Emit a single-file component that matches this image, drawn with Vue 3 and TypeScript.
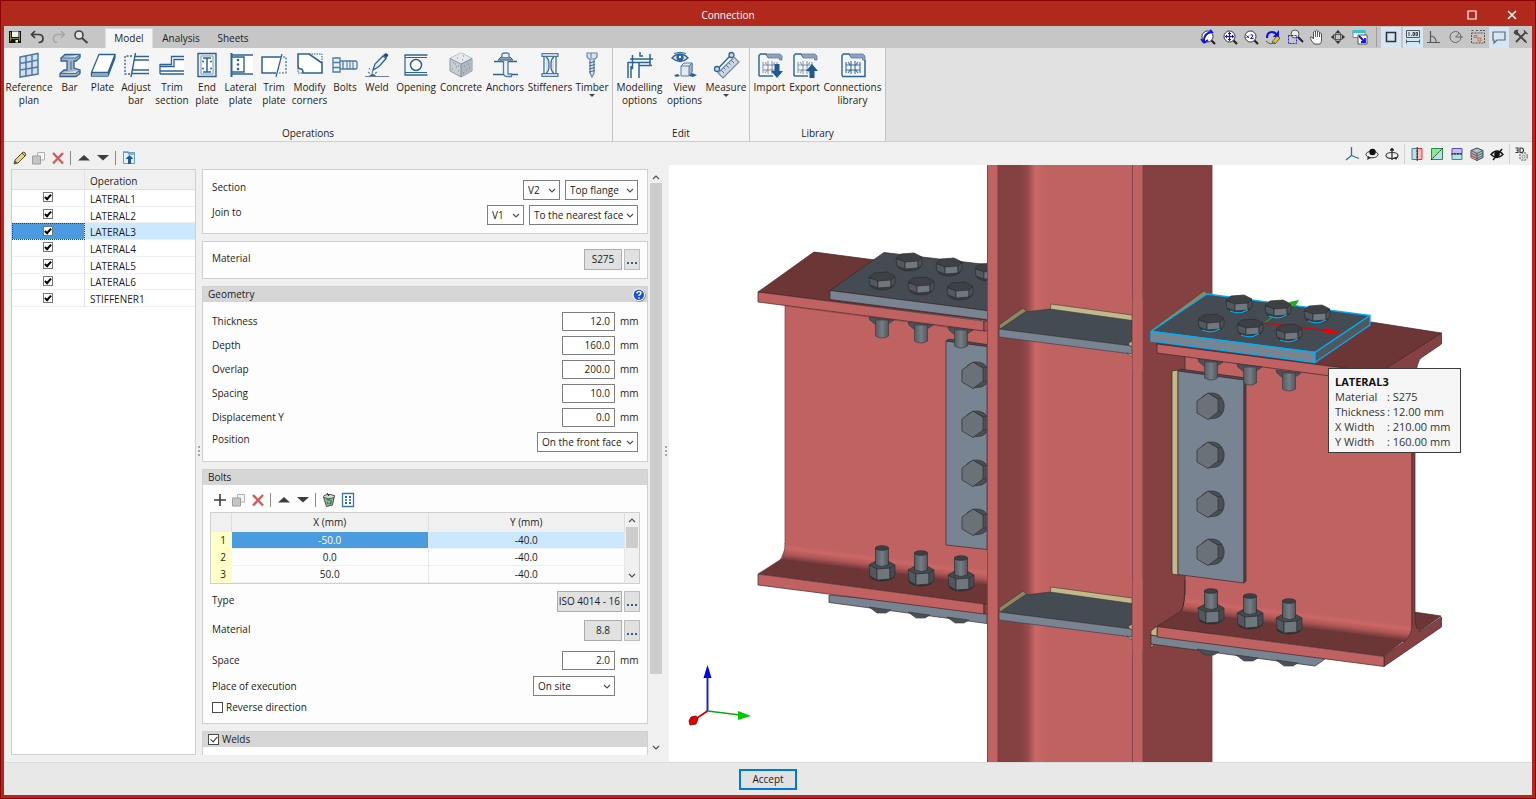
<script setup lang="ts">
import { ref } from 'vue'

interface Tool { icon: string; lines: string[]; menu?: boolean }
interface Group { key: string; title: string; tools: Tool[] }

const B = '#2c6397'
const line = (d: string, w = 1.4, c = B, fill = 'none', extra = '') =>
  `<path d="${d}" fill="${fill}" stroke="${c}" stroke-width="${w}" ${extra}/>`

const folder = line('M2 24V3.5L3.5 2H9l2 2.5', 1.4, B, '#f4f7fb') + '<path d="M9 2h14l2 2v4h-2.500V6H11z" fill="#8fa3bf" stroke="#5b7ba3" stroke-width=".8"/>'
const joint = line('M6 10v11M20 10v11M6 13h14M6 18h14M11 9v13M15 9v13M8 10l3 4M18 10l-3 4M8 21l3-4M18 21l-3-4', 1, '#8193ad')

const icons: Record<string, string> = {
  refplan: line('M4 5L22 1.500V22L4 25zM10 4V24M16 3V23M4 11.500L22 8M4 18L22 15', 1.5, '#4c7ba8', '#d5deea'),
  bar: line('M4 6l4-3.500h15v3l-4 3.500h-2v7l6 2v3.500L19 24.500H3v-3l4-3.500h3V9H4z', 1.3, B, '#a9b5c9') + line('M4 6h15l4-3.500M3 21.500h16l4-3.500M14 9v9', 1.1, '#3f71a3', '#d5dce8'),
  plate: line('M1.500 20.500L9 2.500h16L18 20.500zM1.500 20.500v3.500h16l.5-3.500M18 24l7-18V2.500', 1.3, B, '#fff') + '<path d="M2 21h16v3H2z" fill="#8fa3bf"/>',
  adjust: '<rect x="9" y="4" width="16" height="18" fill="#fff"/>' + line('M9 4H2v18h6', 1.3, B, 'none', 'stroke-dasharray="2 1.500"') + line('M12.500 1L8 25M11 4.500h15M11 8h15M9.500 18H26M8.500 21.500H26', 1.4),
  trim: '<path d="M1 12h11V5h13v17H1z" fill="#fff"/>' + line('M25 4.500H12.500v8H1M25 7.500H15v7H1M1 12v10M1 19h24M1 22h24', 1.3),
  endplate: line('M4 1.500h18v23H4z', 1.4, B, '#e8edf4') + line('M7 4h12v18H7z', 1, '#7d9bbd', '#fff') + line('M9 6h8M13 6v14M9 20h8', 1.5) + '<g fill="#2c6397"><circle cx="9" cy="9.500" r="1"/><circle cx="17" cy="9.500" r="1"/><circle cx="9" cy="16.500" r="1"/><circle cx="17" cy="16.500" r="1"/></g>',
  lateral: '<path d="M4 3h21v20H4z" fill="#fff"/>' + line('M3.500 1v24', 2) + line('M4 3h21M4 22h21M4 5h12v15H4', 1.4) + '<g fill="#2c6397"><circle cx="10" cy="8" r="1.300"/><circle cx="10" cy="12.500" r="1.300"/><circle cx="10" cy="17" r="1.300"/></g>',
  trimplate: '<path d="M1 5h18l-4 17H1z" fill="#fff"/>' + line('M20 5H1v16h14', 1.5) + line('M21 2l-6 23', 1.2) + line('M22 5h3v16h-7', 1.2, B, 'none', 'stroke-dasharray="2 1.500"'),
  corners: line('M1 2v12q0 3 3 3 2 0 2 4h19V11L12 2z', 1.6, B, '#fff') + line('M12 2h13v9M1 16v5h5', 1, B, 'none', 'stroke-dasharray="1.500 1"'),
  bolts: line('M1 6h7v14H1zM1 10.500h7M1 15.500h7M8 9h3v8H8M11 9h13l1 1v6l-1 1H11', 1.3, '#4c7ba8', '#eef2f7') + line('M15 9v8M18 9v8M21 9v8', .9),
  weld: line('M9 18l2-6L19 4l3 2.500-7 8z', 1.3, B, '#eef2f7') + '<path d="M19 3l3-2 2.500 2-2 3z" fill="#1c4c7d"/>' + line('M1 24.500h24M9 18l-1 4M4 20l2 1.500M13 20l-2 1.500M5 16l1 1.500', 1.1, '#6c7f95') + '<path d="M5 24q4-4 7 0z" fill="#2c6397"/>',
  opening: line('M1.500 3h23M1.500 23h23', 1.6) + line('M2 5.500h22M2 20.500h22M2 3v20', 1.2) + line('M7.500 13a5.500 5.500 0 1 0 11 0a5.500 5.500 0 1 0-11 0', 1.5, B, '#fff'),
  concrete: '<path d="M13 1L24 6.500V19L13 25 2 19V6.500z" fill="#c9cdd3" stroke="#8a97a8"/><path d="M13 1L24 6.500 13 12 2 6.500z" fill="#e6eaef"/><path d="M13 12v13l11-6V6.500z" fill="#b2b6bd"/><path d="M2 6.500l11 5.500 11-5.500M13 12v13" stroke="#6f8098" fill="none" stroke-width=".8"/><path d="M5 11h1M8 15h1M4 17h1M10 19h1M16 14h1M20 12h1M18 18h1M21 16h1M9 6h1M14 8h1M15 4h1M7 12h1M10 14h1M15 21h1" stroke="#7c828c"/>',
  anchors: line('M2 9.500h23M1 22.500h12M20 22.500h6', 1.5) + '<path d="M6 8l3-3h9l3 3z" fill="#8fa3bf" stroke="#2c6397"/>' + line('M10 5V2l2-1h3l2 1v3M11.500 9v12q0 4 5 3.500h3v-2.500h-3.500V9', 1.3, '#4c7ba8', '#eef2f7'),
  stiffeners: '<path d="M7 4h12v18H7z" fill="#fff"/>' + line('M5 1.500h16v3H5zM5 21.500h16v3H5z', 1.2, '#4c7ba8', '#c9d5e4') + line('M7 4.500v17M19 4.500v17', 1.2) + line('M9 5q3.500 2 3 8q.5 6-3 8.500M17 5q-3.500 2-3 8q-.5 6 3 8.500', 1.2, B, '#d5deea'),
  timber: line('M8 1h10v4l-2 2h-6L8 5zM11 7h4v14l-2 4-2-4zM12 1v5', 1.2, '#6886aa', '#dde4ed') + line('M10 11l6-1.500M10 14l6-1.500M10 17l6-1.500M10 20l6-1.500', 1.2, '#49688f'),
  modelling: '<path d="M4 11h20v2H12v13H4z" fill="#fff"/>' + line('M3 7h23M5.500 3v14M23 2v11M13 0v4h3M1 10.500h22M1 10v16M4 14v12M12 11v15M12 13.500h13', 1.5),
  viewopt: line('M0 6Q8-2 16 6Q8 13 0 6z', 1.4, B, '#dce6f1') + '<circle cx="8" cy="5.500" r="3.600" fill="#2c6397"/><circle cx="8" cy="5" r="1.200" fill="#fff"/>' + line('M2 1.500Q8-1 14 1.500', 1) + '<path d="M9 14l3-3h8v9l-3 4H9z" fill="#e4eaf2" stroke="#5b7ba3"/><path d="M17 14l3-3v9l-3 4z" fill="#a9b8cc" stroke="#5b7ba3"/><path d="M9 14h8" stroke="#5b7ba3"/><path d="M2 23l4-1 2 2-4 1zM20 21l5 2-4 2-4-1z" fill="#2c6397"/>',
  measure: line('M5.500 16L17 4', 1.4) + line('M1.500 17a2.500 2.500 0 1 0 5 0a2.500 2.500 0 1 0-5 0M16 3a2.500 2.500 0 1 0 5 0a2.500 2.500 0 1 0-5 0', 1.3, B, '#cfd9e6') + line('M5 21L21 5l5 5L10 26z', 1.2, '#7289a8', '#ccd5e0') + line('M8 18l3 3M10.500 15.500l2 2M13 13l3 3M15.500 10.500l2 2M18 8l3 3', 1, '#5b7ba3'),
  import: folder + joint + line('M2 24h14', 1.4) + '<path d="M17.500 12h5v7h3.500l-6 7-6-7h3.500z" fill="#1f5a96"/>',
  export: folder + joint + line('M2 24h14', 1.4) + '<path d="M17.500 26h5v-7h3.500l-6-7-6 7h3.500z" fill="#1f5a96"/>',
  library: folder + line('M2 24.500h23V8', 1.5) + line('M6 10v11M20 10v11M6 13h14M6 18h14M11 9v13M15 9v13M8 10l3 4M18 10l-3 4M8 21l3-4M18 21l-3-4', 1.1, '#3d6da0'),
}

/* 16 x 16 glyphs used on the small toolbars */
const lens = '<path d="M11 11l4 4" stroke="#222" stroke-width="2.200"/><circle cx="7.500" cy="7.500" r="5.500" fill="#fff" stroke="#333"/>'
const small: Record<string, string> = {
  save: '<path d="M2 2h12v12H2z" fill="#111"/><path d="M3 3h1v9H3zM12 3h1v9h-1zM4 9h8v1H4z" fill="#8b8b1a"/><path d="M5 2.500h6.500V8H5z" fill="#f2f2f2"/><path d="M8.500 11h2.500v2.500H8.500z" fill="#eee"/>',
  undo: '<path d="M6 2L2.500 5.500 6 9M2.500 5.500H9.500q4.500 0 4.500 4t-4.500 4" fill="none" stroke="#3c3c3c" stroke-width="1.700"/>',
  redo: '<path d="M10 2l3.500 3.500L10 9M13.500 5.500H7q-4.500 0-4.500 4T6 13.500" fill="none" stroke="#a6a6a6" stroke-width="1.500"/>',
  search: '<circle cx="6" cy="6" r="4" fill="#e4e4e4" stroke="#444" stroke-width="1.600"/><path d="M9 9l5.500 5" stroke="#444" stroke-width="2"/>',
  zprev: lens + '<path d="M4 14Q3 4 12 3L10 1M12 3L8 4M4 14L1 10M4 14l4-3" fill="none" stroke="#1212e0" stroke-width="1.800"/>',
  zall: lens + '<path d="M7.500 3v9M3 7.500h9M6 4.500h3M6 10.500h3M4.500 6v3M10.500 6v3" stroke="#1212e0" stroke-width="1.200"/>',
  z2: lens + '<path d="M3.500 6.500l2.500 2.500M6 6.500L3.500 9M7.500 6q2.500-1 2.500 1L7.500 9.500h3" fill="none" stroke="#1212e0"/>',
  redraw: '<path d="M2 9q0-6 5-6 3 0 5 3" fill="none" stroke="#1212e0" stroke-width="2.200"/><path d="M14 1v7H8z" fill="#1212e0"/><path d="M7 13l5-6 3 2-5 6z" fill="#e9c430" stroke="#333" stroke-width=".7"/><path d="M1 12q5 5 9 1" fill="none" stroke="#555"/>',
  zwin: '<circle cx="8" cy="5" r="4" fill="#eee" stroke="#555"/><path d="M11 8l5 5" stroke="#222" stroke-width="2"/><path d="M1.500 6.500h8v8h-8z" fill="none" stroke="#2222e0" stroke-dasharray="2 1"/>',
  hand: '<path d="M5 15Q1 10 1.500 8q1.500-1 3 2V3q1-1.500 2 0V2q1-1.500 2 0v1q1-1.500 2 0v1.500q1-1 2 0V11q0 3-1.500 4zM6.500 3v5M8.500 3v5M10.500 4v4" fill="#fff" stroke="#444" stroke-width=".9"/>',
  orbit: '<ellipse cx="8" cy="8" rx="6" ry="2.800" fill="none" stroke="#444"/><ellipse cx="8" cy="8" rx="2.800" ry="6" fill="none" stroke="#444"/><path d="M8 1l2 3H6zM8 15l2-3H6zM1 8l3-2v4zM15 8l-3-2v4z" fill="#333"/>',
  panels: '<path d="M1 1.500h12v7H1z" fill="#fff" stroke="#2aa5b5"/><path d="M1 1h12v3H1z" fill="#35c3d3"/><path d="M6 6h9v9H6z" fill="#fff" stroke="#555"/><path d="M7 7l6 6M13 9v4H9" stroke="#1212e0" stroke-width="1.800" fill="none"/>',
  square: '<path d="M3.500 3.500h9v9h-9z" fill="none" stroke="#333" stroke-width="1.600"/>',
  dims: '<path d="M1.500 1.500h13v7h-13zM1 12.500h14M1.500 10.500v4M14.500 10.500v4" fill="none" stroke="#555"/><path d="M4 3v4M6 6.500h.8M8 3.500h1.500v3H8zM11 3.500h1.500v3H11z" stroke="#333" fill="none" stroke-width=".9"/>',
  angle: '<path d="M4.500 2v12M1 13.500h13M4.500 7q5 0 6 6.500" fill="none" stroke="#555" stroke-width="1.200"/>',
  polar: '<circle cx="7.500" cy="8" r="5.500" fill="none" stroke="#666"/><path d="M7.500 8H15M7.500 8l4-4" stroke="#666"/>',
  script: '<path d="M1.500 1.500h3M6 1.500h2M10 1.500h5M1.500 4h13v10h-13z" fill="none" stroke="#555" stroke-dasharray="2 1"/><path d="M4 6.500h3v2H4zM8 9h3v3H8z" fill="none" stroke="#dd6a3f"/>',
  note: '<path d="M2 3h12v8H6l-3 3v-3H2z" fill="none" stroke="#666" stroke-width="1.200"/>',
  tools: '<path d="M3 3l10 10M13 3L3 13" stroke="#444" stroke-width="1.900"/><path d="M1 4q0-3 4-3L4 3l2 2-2 1zM11 1q0 3 4 4M10 10l4 4" fill="#444" stroke="#444"/>',
  axes: '<path d="M7.500 1v8.500L2 14M7.500 9.500L15 12.500" fill="none" stroke="#33718a" stroke-width="1.300"/>',
  eyeorb: '<ellipse cx="8" cy="8.500" rx="6" ry="3.300" fill="none" stroke="#333"/><circle cx="8.500" cy="6" r="3.200" fill="#111"/><path d="M3 14l1-4 3 2z" fill="#333"/>',
  turn: '<path d="M8 2v12M6 4h4" stroke="#333" stroke-width="1.300"/><ellipse cx="8" cy="9.500" rx="6" ry="3" fill="none" stroke="#333" stroke-width="1.200"/><circle cx="8" cy="3.500" r="1.500" fill="#333"/><path d="M10 11l4 0-2 3z" fill="#333"/>',
  secx: '<path d="M3 2.500h5v11H3z" fill="#b9e1ea" stroke="#4c7f8c"/><path d="M8.500 2.500H13v11H8.500z" fill="#ffb9b9" stroke="#e03434"/><path d="M8.200 1v14" stroke="#222" stroke-dasharray="2 1"/>',
  secy: '<path d="M2.500 2.500h11v11h-11z" fill="#b9e1ea" stroke="#2b8b4a"/><path d="M3 3h10L3 13z" fill="#7df08a"/><path d="M2 14L14 2" stroke="#222" stroke-dasharray="2 1"/>',
  secz: '<path d="M3 2.500h10v5H3z" fill="#c7bdf2" stroke="#5a4cc4"/><path d="M3 8h10v5.500H3z" fill="#b9e1ea" stroke="#4c7f8c"/><path d="M2 8h12" stroke="#222" stroke-dasharray="2 1"/>',
  cube: '<path d="M8 2l6 2.500v7L8 14.500l-6-3v-7z" fill="#9fc9d6" stroke="#444"/><path d="M2.500 5L8 7.500V14l-5.500-2.500z" fill="#e4a0a0"/><path d="M2 4.500l6 3 6-3M8 7v7.500M2 7l6 3 6-3M2 9.500l6 3 6-3" fill="none" stroke="#444" stroke-width=".8"/>',
  eyeoff: '<path d="M2 8.500q6-7 12 0-6 6-12 0z" fill="none" stroke="#111" stroke-width="1.300"/><circle cx="8" cy="8.200" r="2.800" fill="#111"/><path d="M13 3L4 14" stroke="#111" stroke-width="1.400"/>',
  gear3d: '<circle cx="9.500" cy="10.500" r="3.800" fill="none" stroke="#888" stroke-width="1.600" stroke-dasharray="2 1"/><circle cx="9.500" cy="10.500" r="1.500" fill="none" stroke="#888"/><path d="M1.500 2H4v2.200H2.500M4 4.200v2.300H1.500M6 2h1.500q2 0 2 2.200t-2 2.300H6z" fill="none" stroke="#333" stroke-width="1.100"/>',
  pencil: '<path d="M2 14l1-4L11 2q2.500 0 3 3L6 13z" fill="#ecd27c" stroke="#57533f"/><path d="M2 14l1-3.500L5.500 13z" fill="#555"/><path d="M10 3l3 3" stroke="#57533f"/>',
  copy: '<path d="M6.500 2.500h7v7.500h-7z" fill="#f5f5f5" stroke="#b3b3b3"/><path d="M1.500 6h8v8h-8z" fill="#c5c5c5" stroke="#9d9d9d"/>',
  cross: '<path d="M3 3l10 10.500M13 3L3 13.500" stroke="#d35b59" stroke-width="2.400"/>',
  plus: '<path d="M8 2v12M2 8h12" stroke="#3c3c3c" stroke-width="1.600"/>',
  up: '<path d="M2 10.500L8 5l6 5.500z" fill="#3d3d3d"/>',
  down: '<path d="M2 5h12l-6 5.500z" fill="#3d3d3d"/>',
  load: '<path d="M2.500 2.500h11v11h-11z" fill="#e7f1fa" stroke="#6a9cc8"/><path d="M2 2h5l1 2h6" fill="none" stroke="#6a9cc8" stroke-width="1.500"/><path d="M7 14V9H4.500L8.500 5l4 4H10v5z" fill="#1f5a96"/>',
  bin: '<path d="M2.500 5l11-1.500L11.500 13l-6 1.500z" fill="#a4a9a7" stroke="#4c5450"/><ellipse cx="8" cy="4.500" rx="5.500" ry="2" fill="#d3d8d5" stroke="#4c5450"/><path d="M6 8l2-1 1 2M10 8v3l-2 1M6 10l1 2" stroke="#1fa534" stroke-width="1.500" fill="none"/><path d="M6 1l2 3" stroke="#222"/>',
  grid: '<path d="M2.500 1.500h11v13h-11z" fill="#fff" stroke="#3f74a6" stroke-width="1.300"/><g fill="#2c5f94"><path d="M5 4h2v2H5zM9 4h2v2H9zM5 7.200h2v1.600H5zM9 7.200h2v1.600H9zM5 10h2v2H5zM9 10h2v2H9z"/></g>',
}

const groups: Group[] = [
  { key: 'operations', title: 'Operations', tools: [
    { icon: 'refplan', lines: ['Reference', 'plan'] }, { icon: 'bar', lines: ['Bar'] }, { icon: 'plate', lines: ['Plate'] },
    { icon: 'adjust', lines: ['Adjust', 'bar'] }, { icon: 'trim', lines: ['Trim', 'section'] }, { icon: 'endplate', lines: ['End', 'plate'] },
    { icon: 'lateral', lines: ['Lateral', 'plate'] }, { icon: 'trimplate', lines: ['Trim', 'plate'] }, { icon: 'corners', lines: ['Modify', 'corners'] },
    { icon: 'bolts', lines: ['Bolts'] }, { icon: 'weld', lines: ['Weld'] }, { icon: 'opening', lines: ['Opening'] },
    { icon: 'concrete', lines: ['Concrete'] }, { icon: 'anchors', lines: ['Anchors'] }, { icon: 'stiffeners', lines: ['Stiffeners'] },
    { icon: 'timber', lines: ['Timber'], menu: true },
  ] },
  { key: 'edit', title: 'Edit', tools: [
    { icon: 'modelling', lines: ['Modelling', 'options'] }, { icon: 'viewopt', lines: ['View', 'options'] }, { icon: 'measure', lines: ['Measure'], menu: true },
  ] },
  { key: 'library', title: 'Library', tools: [
    { icon: 'import', lines: ['Import'] }, { icon: 'export', lines: ['Export'] }, { icon: 'library', lines: ['Connections', 'library'] },
  ] },
]

const quick = ['save', 'undo', 'redo', 'search']
const zoomTools = ['zprev', 'zall', 'z2', 'redraw', 'zwin', 'hand', 'orbit', 'panels']
const modeTools = ['square', 'dims', 'angle', 'polar', 'script', 'note', 'tools']
const activeModes = ['square', 'dims', 'note']
const viewTools = ['axes', 'eyeorb', 'turn', '|', 'secx', 'secy', 'secz', 'cube', 'eyeoff', '|', 'gear3d']
const opTools = ['pencil', 'copy', 'cross', '|', 'up', 'down', '|', 'load']
const boltTools = ['plus', 'copy', 'cross', '|', 'up', 'down', '|', 'bin', 'grid']

const operations = ref(['LATERAL1', 'LATERAL2', 'LATERAL3', 'LATERAL4', 'LATERAL5', 'LATERAL6', 'STIFFENER1'].map(name => ({ name, on: true })))
const selected = ref('LATERAL3')
const dims = ref([
  { id: 'thickness', label: 'Thickness', value: '12.0' },
  { id: 'depth', label: 'Depth', value: '160.0' },
  { id: 'overlap', label: 'Overlap', value: '200.0' },
  { id: 'spacing', label: 'Spacing', value: '10.0' },
  { id: 'dispy', label: 'Displacement Y', value: '0.0' },
])
const space = ref('2.0')
const boltRows = [['-50.0', '-40.0'], ['0.0', '-40.0'], ['50.0', '-40.0']]
const reverse = ref(false)
const welds = ref(true)
const tip = [['Material', 'S275'], ['Thickness', '12.00 mm'], ['X Width', '210.00 mm'], ['Y Width', '160.00 mm']]

const headsLeft = [[909, 262], [949, 267], [988, 272], [882, 281], [921, 286], [960, 291]]
const headsRight = [[1239, 304], [1278, 309], [1317, 314], [1211, 323], [1250, 328], [1289, 333]]
const shanks = [[882, 317], [921, 322], [961, 327], [1211, 359], [1250, 364], [1289, 370]]
const nuts = [[882, 546], [921, 551], [961, 556], [1211, 589], [1250, 594], [1289, 599]]
const caps = [[880, 609], [919, 614], [958, 619], [1208, 651], [1247, 657], [1287, 662]]
const hexLeft = [375, 424, 473, 522]
const hexRight = [406, 455, 504, 552]
</script>

<template>
  <div class="window">
    <header class="titlebar">
      <span class="title">Connection</span>
      <div class="winbtns">
        <button aria-label="Maximize"><svg viewBox="0 0 10 10"><path d="M1 1h8v8H1z" fill="none" stroke="#fff" stroke-width="1.200" /></svg></button>
        <button aria-label="Close"><svg viewBox="0 0 10 10"><path d="M1 1l8 8M9 1L1 9" stroke="#fff" stroke-width="1.500" /></svg></button>
      </div>
    </header>

    <nav class="menubar">
      <div class="quick">
        <button v-for="i in quick" :key="i" :aria-label="i"><svg class="s16" viewBox="0 0 16 16" v-html="small[i]" /></button>
      </div>
      <div class="tabs">
        <button class="tab active">Model</button>
        <button class="tab wide">Analysis</button>
        <button class="tab">Sheets</button>
      </div>
      <div class="spread zooms">
        <button v-for="i in zoomTools" :key="i" :aria-label="i"><svg class="s16" viewBox="0 0 16 16" v-html="small[i]" /></button>
      </div>
      <span class="vsep" />
      <div class="spread modes">
        <button v-for="i in modeTools" :key="i" :aria-label="i" :class="{ on: activeModes.includes(i) }"><svg class="s16" viewBox="0 0 16 16" v-html="small[i]" /></button>
      </div>
    </nav>

    <section class="ribbon">
      <div v-for="g in groups" :key="g.key" class="group">
        <div class="tools" :class="g.key">
          <button v-for="(t, n) in g.tools" :key="n" class="tool">
            <svg class="s26" viewBox="0 0 26 26" v-html="icons[t.icon]" />
            <span v-for="l in t.lines" :key="l" class="lbl">{{ l }}</span>
            <span v-if="t.menu" class="caret" />
          </button>
        </div>
        <div class="gtitle">{{ g.title }}</div>
      </div>
    </section>

    <main class="work">
      <aside class="ops">
        <div class="bar">
          <template v-for="(i, n) in opTools" :key="n">
            <span v-if="i === '|'" class="sep" />
            <button v-else :aria-label="i"><svg class="s16" viewBox="0 0 16 16" v-html="small[i]" /></button>
          </template>
        </div>
        <div class="listbox">
          <table class="optable">
            <thead><tr><th class="c1"></th><th>Operation</th></tr></thead>
            <tbody>
              <tr v-for="o in operations" :key="o.name" :class="{ sel: o.name === selected }" @click="selected = o.name">
                <td class="c1"><input v-model="o.on" type="checkbox" class="tick heavy" :aria-label="o.name"></td>
                <td>{{ o.name }}</td>
              </tr>
            </tbody>
          </table>
        </div>
      </aside>
      <div class="splitter"><span class="grip" /></div>

      <section class="props">
        <div class="cards">
          <div class="card section">
            <div class="row"><label class="raised" for="sec">Section</label>
              <span class="pick w37"><select id="sec"><option>V2</option></select><svg viewBox="0 0 8 5"><path d="M1 1l3 3 3-3" /></svg></span>
              <span class="pick w73"><select aria-label="Flange"><option>Top flange</option></select><svg viewBox="0 0 8 5"><path d="M1 1l3 3 3-3" /></svg></span>
            </div>
            <div class="row"><label class="raised" for="join">Join to</label>
              <span class="pick w37"><select id="join"><option>V1</option></select><svg viewBox="0 0 8 5"><path d="M1 1l3 3 3-3" /></svg></span>
              <span class="pick w109"><select aria-label="Face"><option>To the nearest face</option></select><svg viewBox="0 0 8 5"><path d="M1 1l3 3 3-3" /></svg></span>
            </div>
          </div>

          <div class="card material">
            <div class="row btns"><span class="name">Material</span><button class="val">S275</button><button class="dots" aria-label="Choose material"><i /><i /><i /></button></div>
          </div>

          <div class="card">
            <h2>Geometry
              <button class="help" aria-label="Help"><svg viewBox="0 0 14 14"><circle cx="7.500" cy="7.500" r="6.300" fill="#8d8d8d" /><circle cx="6.800" cy="6.800" r="6.200" fill="#fff" /><circle cx="6.800" cy="6.800" r="5.200" fill="#1d4fd8" /><path d="M5 5.500q0-2 2-2t2 1.600q0 1-2 2.200v.8M7 9.300v1.400" fill="none" stroke="#fff" stroke-width="1.400" /></svg></button>
            </h2>
            <div class="geometry">
              <div v-for="d in dims" :key="d.id" class="row"><label :for="d.id">{{ d.label }}</label><input :id="d.id" v-model="d.value" type="text" class="num"><span class="unit">mm</span></div>
              <div class="row"><label class="raised" for="pos">Position</label><span class="pick w101"><select id="pos"><option>On the front face</option></select><svg viewBox="0 0 8 5"><path d="M1 1l3 3 3-3" /></svg></span></div>
            </div>
          </div>

          <div class="card">
            <h2>Bolts</h2>
            <div class="bolts">
              <div class="bar">
                <template v-for="(i, n) in boltTools" :key="n">
                  <span v-if="i === '|'" class="sep" />
                  <button v-else :aria-label="i"><svg class="s16" viewBox="0 0 16 16" v-html="small[i]" /></button>
                </template>
              </div>
              <div class="boltbox">
                <table class="bolttable">
                  <thead><tr><th class="idx"></th><th>X (mm)</th><th>Y (mm)</th></tr></thead>
                  <tbody>
                    <tr v-for="(r, n) in boltRows" :key="n" :class="{ sel: n === 0 }"><th class="idx">{{ n + 1 }}</th><td>{{ r[0] }}</td><td>{{ r[1] }}</td></tr>
                  </tbody>
                </table>
                <div class="vscroll small"><svg viewBox="0 0 8 5"><path d="M1 4l3-3 3 3" /></svg><span class="thumb" /><svg class="dn" viewBox="0 0 8 5"><path d="M1 1l3 3 3-3" /></svg></div>
              </div>
              <div class="row btns"><span class="name">Type</span><button class="val">ISO 4014 - 16</button><button class="dots" aria-label="Choose type"><i /><i /><i /></button></div>
              <div class="row btns mat"><span class="name">Material</span><button class="val">8.8</button><button class="dots" aria-label="Choose bolt material"><i /><i /><i /></button></div>
              <div class="row spacerow"><label for="space">Space</label><input id="space" v-model="space" type="text" class="num"><span class="unit">mm</span></div>
              <div class="row place"><label for="place">Place of execution</label><span class="pick w82"><select id="place"><option>On site</option></select><svg viewBox="0 0 8 5"><path d="M1 1l3 3 3-3" /></svg></span><span class="unit" /></div>
              <label class="check"><input v-model="reverse" type="checkbox" class="tick">Reverse direction</label>
            </div>
          </div>

          <div class="card welds">
            <h2><label class="check"><input v-model="welds" type="checkbox" class="tick">Welds</label></h2>
            <div class="filler" />
          </div>
        </div>
        <div class="vscroll"><svg viewBox="0 0 8 5"><path d="M1 4l3-3 3 3" /></svg><span class="thumb" /><svg class="dn" viewBox="0 0 8 5"><path d="M1 1l3 3 3-3" /></svg></div>
      </section>
      <div class="splitter right"><span class="grip" /></div>

      <section class="view">
        <div class="viewbar">
          <template v-for="(i, n) in viewTools" :key="n">
            <span v-if="i === '|'" class="sep" />
            <button v-else :aria-label="i"><svg class="s16" viewBox="0 0 16 16" v-html="small[i]" /></button>
          </template>
        </div>
        <div class="canvas">
          <svg class="scene" viewBox="669 165 863 597" role="img" aria-label="3D view of the connection">
            <defs>
              <linearGradient id="root" x1="1020" x2="1046" y1="0" y2="0" gradientUnits="userSpaceOnUse"><stop offset="0" stop-color="#854042" /><stop offset=".3" stop-color="#954a4b" /><stop offset=".6" stop-color="#cc6867" /><stop offset="1" stop-color="#c06262" /></linearGradient>
              <linearGradient id="filL" x1="785" y1="544" x2="783" y2="560" gradientUnits="userSpaceOnUse"><stop offset="0" stop-color="#c06262" /><stop offset=".25" stop-color="#cb6866" /><stop offset=".6" stop-color="#b05756" /><stop offset="1" stop-color="#6c3637" /></linearGradient>
              <linearGradient id="filR" x1="1185" y1="597" x2="1183" y2="613" gradientUnits="userSpaceOnUse"><stop offset="0" stop-color="#c06262" /><stop offset=".25" stop-color="#cb6866" /><stop offset=".6" stop-color="#b05756" /><stop offset="1" stop-color="#6c3637" /></linearGradient>
              <linearGradient id="rod" x1="0" x2="1" y1="0" y2="0"><stop offset="0" stop-color="#555b61" /><stop offset=".5" stop-color="#767d85" /><stop offset="1" stop-color="#52575d" /></linearGradient>
              <g id="head" stroke="#2b2e31" stroke-width=".7">
                <ellipse cy="3" rx="12" ry="6" fill="#393c40" />
                <path d="M-13-3L-4-1V7L-12 4z" fill="#53585e" /><path d="M-4-1L9-2V6L-4 7z" fill="#71777e" /><path d="M9-2L13-4V3L9 6z" fill="#4c5156" />
                <path d="M-13-4L-8-8 5-9 13-5 9-1-4 0z" fill="#3d4145" />
              </g>
              <g id="shank"><path d="M-13 0L-12 3-6 8 6 7 12 3z" fill="#4c5156" stroke="#33373b" stroke-width=".7" /><path d="M-6.500 3V19Q0 23 6.500 19V3z" fill="url(#rod)" stroke="#3a3e42" stroke-width=".7" /></g>
              <g id="nut" stroke="#2b2e31" stroke-width=".7">
                <ellipse cy="30" rx="12" ry="5" fill="#2f3235" /><path d="M-13 19L-6 15 6 15 13 19 9 23-5 24z" fill="#44494e" />
                <path d="M-13 19L-5 23V34L-12 30z" fill="#53585e" /><path d="M-5 23L8 22V33L-5 34z" fill="#6f767d" /><path d="M8 22L13 19V30L8 33z" fill="#464b50" />
                <path d="M-6.500 2V19Q0 22 6.500 19V2z" fill="url(#rod)" /><ellipse cy="2" rx="6.500" ry="2.300" fill="#3c4044" />
              </g>
              <g id="hex" stroke="#33373b" stroke-width=".8"><path d="M-8-9Q0-16 9-11 15-5 14 2 13 10 6 12L-2 13z" fill="#4b4f54" /><path d="M-13-5L-2-13 8-7V6L-2 13.500-13 7z" fill="#6b7178" /><path d="M-2-13L8-7 12-8M8 6l4 0" fill="none" /></g>
              <g id="stiff" stroke="#33373b" stroke-width=".6">
                <path d="M999 325L1023 308 1027 312 1000 332z" fill="#8f875f" /><path d="M1051 304L1132 315V322L1050 310z" fill="#c4b889" />
                <path d="M1000 329L1025 312 1050 309 1132 320.500V346z" fill="#454b53" /><path d="M999 329L1132 346V354L999 337z" fill="#788491" />
                <path d="M1132 341l-4 3 4 3zM1127 353l5 4v-3z" fill="#c4b889" />
              </g>
            </defs>
            <rect x="669" y="165" width="863" height="597" fill="#fff" />

            <g stroke="#3d2526" stroke-width=".7">
              <path d="M829 595L829 602.500 987 623.500V610z" fill="#788491" />
              <path d="M785 304L987 325V575L787 552 780 560 785 548z" fill="#c06262" stroke="none" />
              <path d="M785 304V544" fill="none" stroke="#7a4546" />
              <path d="M785 543Q785 557 780 560L990 588V571z" fill="url(#filL)" stroke="none" />
              <path d="M758 574L781 559 990 586V605z" fill="#6c3637" stroke="none" />
              <path d="M785 543Q785 556 780 560L758 574" fill="none" stroke="#7a4546" />
              <path d="M758 574L984 604V614L758 585z" fill="#c06262" /><path d="M984 604h4v10h-4z" fill="#854042" />
              <path d="M758 292L814 252 990 275V321z" fill="#6c3637" />
              <path d="M758 292L984 321V331L758 302z" fill="#c06262" /><path d="M984 321h4v10h-4z" fill="#a65354" />
              <path d="M785 306L968 330" fill="none" stroke="#904a4b" />
              <path d="M830 290.500L884 252.500 990 265V311z" fill="#454b53" /><path d="M830 290.500L990 311V320L830 299.500z" fill="#788491" />
              <path d="M946 341L987 346V549.500L946 545z" fill="#788491" /><path d="M946 341L949 339 990 345V347z" fill="#454b53" />
            </g>
            <use v-for="y in hexLeft" :key="y" href="#hex" x="975" :y="y" />
            <use v-for="p in headsLeft" :key="p[0]" href="#head" :x="p[0]" :y="p[1]" />

            <g stroke="none">
              <rect x="987" y="165" width="11" height="597" fill="#c06262" />
              <rect x="998" y="165" width="24" height="597" fill="#854042" />
              <rect x="1020" y="165" width="26" height="597" fill="url(#root)" />
              <rect x="1045" y="165" width="98" height="597" fill="#c06262" />
              <rect x="1143" y="165" width="69" height="597" fill="#854042" />
              <path d="M987.500 165V762M998 165V762M1132.500 165V762M1143 165V762M1212 165V762" stroke="#7a4143" stroke-width=".9" />
            </g>
            <use href="#stiff" /><use href="#stiff" y="283" />
            <path d="M1132 300h11v70h-11zM1132 580h11v70h-11z" fill="#c06262" /><path d="M1132.500 290V660M1143 290V660" stroke="#8d4a4b" stroke-width=".8" />

            <g stroke="#3d2526" stroke-width=".7">
              <path d="M1151 635L1325 657V659L1315 666 1151 644z" fill="#788491" />
              <path d="M1185 350L1329 366 1412 380V627L1405 641 1182 612 1185 598z" fill="#c06262" />
              <path d="M1185 595L1412 625Q1412 637 1404 642L1181 613Q1185 606 1185 595z" fill="url(#filR)" stroke="none" />
              <path d="M1414 612L1441 616 1420 631 1414 625z" fill="#6c3637" />
              <path d="M1412 380H1415V620Q1416 632 1421 631L1441.500 617V627L1384 666.500V656L1404 642Q1412 636 1412 624z" fill="#854042" />
              <path d="M1157 626.500L1182 611 1404 641 1384 656.500z" fill="#6c3637" stroke="none" />
              <path d="M1157 626.500L1181 611Q1185 606 1185 580" fill="none" />
              <path d="M1157 626.500L1384 656.500V666.500L1157 637z" fill="#c06262" />
              <path d="M1151 631L1157 626V636L1151 635z" fill="#c4b889" />
              <path d="M1151 644l3 1-3 3z" fill="#c4b889" />
              <path d="M1157 340L1315 358 1371 322 1441.500 333 1391 369V376L1157 346z" fill="#6c3637" />
              <path d="M1441.500 333V344L1421 358Q1416 362 1415 385H1360z" fill="#854042" />
              <path d="M1157 344L1329 366 1391 374V384L1157 353z" fill="#c06262" />
              <path d="M1172 371L1178 370V575L1172 574z" fill="#c4b889" />
              <path d="M1178 371L1180 369 1246 378 1244 381z" fill="#454b53" />
              <path d="M1178 371L1244 380V583L1178 574.500z" fill="#788491" /><path d="M1244 380L1246 378V581L1244 583z" fill="#454b53" />
            </g>
            <use v-for="y in hexRight" :key="y" href="#hex" x="1210" :y="y" />
            <g><use v-for="p in shanks" :key="p[0]" href="#shank" :x="p[0]" :y="p[1]" /></g>
            <g><use v-for="p in nuts" :key="p[0]" href="#nut" :x="p[0]" :y="p[1]" /></g>
            <path v-for="p in caps" :key="p[0]" :d="`M${p[0] - 11} ${p[1] - 2}l22 3-5 3h-9z`" fill="#4b5056" stroke="#33373b" stroke-width=".6" />

            <path d="M1151 330L1204 291 1208 294 1152 333z" fill="#8f875f" stroke="#44402e" stroke-width=".6" />
            <g stroke="#00aef5" stroke-width="1.300" stroke-linejoin="round">
              <path d="M1151 331.500L1207 294 1370 315.500 1315 352.500z" fill="#454b53" />
              <path d="M1151 331.500L1315 352.500V362.500L1151 341z" fill="#788491" />
              <path d="M1315 352.500L1370 315.500V325L1315 362.500z" fill="#50575f" />
            </g>
            <path d="M1264 323L1293 303" stroke="#1fa51f" stroke-width="1.300" /><path d="M1299 300L1289 302 1295 307z" fill="#17b317" />
            <path d="M1264 323L1328 331" stroke="#c01010" stroke-width="1.400" /><path d="M1341 333L1326 328V334z" fill="#f00000" />
            <g v-for="p in headsRight" :key="p[0]"><use href="#head" :x="p[0]" :y="p[1]" /><path :d="`M${p[0] - 9} ${p[1] + 7}q9 4 18-1`" fill="none" stroke="#00aef5" stroke-width="1.200" /></g>

            <path d="M707.500 711V675" stroke="#2222cc" stroke-width="2" /><path d="M703.500 678L707.500 665 711.500 678z" fill="#0000e6" />
            <path d="M707.500 711L740 715" stroke="#12a512" stroke-width="1.600" /><path d="M738 711L751 716 738 720z" fill="#00c800" />
            <path d="M707.500 711L694 720" stroke="#d00000" stroke-width="1.800" /><path d="M689 721l2-4 5-1 2 3-2 5-6 1z" fill="#e60000" stroke="#700" stroke-width=".8" />
          </svg>
          <div class="tip">
            <strong>LATERAL3</strong>
            <dl><template v-for="t in tip" :key="t[0]"><dt>{{ t[0] }}</dt><dd>: {{ t[1] }}</dd></template></dl>
          </div>
        </div>
      </section>
    </main>

    <footer class="foot"><button class="accept">Accept</button></footer>
  </div>
</template>

<style>
html, body { margin: 0; background: #b0291c; }
</style>

<style scoped>
.window { display: flex; flex-direction: column; height: 100vh; box-sizing: border-box; padding: 0 4px 4px; background: #b0291c; box-shadow: inset 0 0 0 1px #8b0000; font-family: "Open Sans", "Noto Sans", sans-serif; font-size: 10px; line-height: 13px; color: #1c1c1c; }
.window *, .window *::before, .window *::after { box-sizing: border-box; }
button { font: inherit; color: inherit; background: none; border: 0; padding: 0; margin: 0; display: flex; align-items: center; justify-content: center; }
select, input { font: inherit; color: inherit; margin: 0; }
svg { display: block; flex: none; overflow: visible; }
.s16 { width: 16px; height: 16px; }
.s26 { width: 26px; height: 26px; }

.titlebar { flex: none; height: 26px; display: flex; align-items: center; padding-top: 4px; color: #fff; }
.title { flex: 1; text-align: center; }
.winbtns { display: flex; justify-content: flex-end; }
.winbtns button { width: 40px; height: 20px; }
.winbtns svg { width: 10px; height: 10px; }

.menubar { flex: none; height: 22px; display: flex; align-items: stretch; background: #c6c6c6; }
.quick, .tabs, .spread { display: flex; }
.quick button { width: 22px; }
.tabs { margin-left: 13px; padding-top: 2px; flex: 1; }
.tab { width: 48px; }
.tab.wide { width: 56px; }
.tab.active { background: #f5f5f5; border: 1px solid #dcdcdc; border-bottom: 0; }
.spread { justify-content: space-between; align-items: center; }
.spread button { width: 20px; height: 21px; }
.spread button.on { background: #d5e6f5; }
.zooms { width: 172px; }
.modes { width: 150px; }
.vsep { width: 1px; margin: 1px 4px 1px 6px; background: #9d9d9d; }
.modes { margin-right: 1px; }

.ribbon { flex: none; height: 94px; display: flex; background: #e1e1e1; border-bottom: 1px solid #cfcfcf; }
.group { display: flex; flex-direction: column; justify-content: space-between; background: #f5f5f5; border-right: 1px solid #c2c2c2; }
.tools { display: grid; padding-top: 4px; }
.tools.operations { grid-template-columns: 50px 31px 35px 32px 40px 30px 37px 30px 41px 30px 34px 44px 46px 42px 48px 36px; padding-right: 2px; }
.tools.edit { grid-template-columns: 53px 37px 46px; }
.tools.library { grid-template-columns: 39px 31px 65px; }
.tool { flex-direction: column; justify-content: flex-start; white-space: nowrap; }
.tool .s26 { margin-bottom: 3px; }
.caret { border: 3px solid transparent; border-top-color: #444; border-bottom: 0; }
.gtitle { text-align: center; height: 14px; }

.work { flex: 1; min-height: 0; display: flex; background: #f0f0f0; }
.ops { width: 192px; padding: 6px 0 7px 7px; display: flex; flex-direction: column; }
.bar { display: flex; align-items: center; height: 20px; flex: none; }
.bar button { width: 19px; height: 20px; }
.sep { width: 1px; height: 14px; background: #8a8a8a; margin: 0 3px; }
.ops .bar { margin: 0 0 1px -1px; }
.listbox { flex: 1; background: #fff; border: 1px solid #cfcfcf; }
table { border-collapse: separate; border-spacing: 0; table-layout: fixed; width: 100%; }
th { font-weight: 400; }
th, td { padding: 0; }
.optable { height: 137px; }
.optable th { background: #f0f0f0; border-bottom: 1px solid #e0e0e0; text-align: left; padding: 3px 0 0 5px; height: 20px; }
.optable td { border-bottom: 1px solid #efefef; padding: 2px 0 0 5px; line-height: 12px; }
.optable .c1 { width: 73px; text-align: center; border-right: 1px solid #e3e3e3; padding: 0; }
.optable .sel td { background: #cce8ff; }
.optable .sel .c1 { background: #4a9be0; outline: 1px dotted #20476b; outline-offset: -1px; }
.tick { appearance: none; flex: none; width: 11px; height: 11px; border: 1px solid #4a4a4a; background: #fff; position: relative; display: inline-block; vertical-align: middle; }
.tick:checked::after { content: ""; position: absolute; left: 3px; top: 0; width: 4px; height: 7px; border: solid #333; border-width: 0 1px 1px 0; transform: rotate(42deg); }
.tick.heavy { width: 10px; height: 10px; border-color: #777; display: block; margin: 1px auto 2px; }
.tick.heavy:checked::after { left: 2px; border-color: #000; border-width: 0 2px 2px 0; }

.splitter { width: 6px; display: flex; align-items: center; justify-content: center; flex: none; }
.splitter.right { width: 7px; }
.grip { width: 2px; height: 12px; background: repeating-linear-gradient(#a8a8a8 0 2px, transparent 2px 4px); }

.props { width: 460px; flex: none; padding: 27px 0 7px; display: flex; gap: 2px; min-height: 0; }
.cards { flex: 1; min-width: 0; overflow: hidden; display: flex; flex-direction: column; gap: 7px; }
.card { flex: none; border: 1px solid #d0d0d0; background: #fdfdfd; }
.card h2 { margin: 0; height: 15px; background: #d6d6d6; font: inherit; padding: 0 0 0 5px; display: flex; align-items: center; justify-content: space-between; }
.help svg { width: 14px; height: 14px; margin-right: 1px; }
.row { display: flex; align-items: center; }
.row label, .row .name { flex: 1; }
.raised { padding-bottom: 5px; }
.section { padding: 10px 9px 8px 9px; display: flex; flex-direction: column; gap: 5px; }
.section .pick { margin-left: 5px; }
.pick { position: relative; display: block; height: 20px; }
.pick select { appearance: none; width: 100%; height: 100%; border: 1px solid #7f7f7f; border-radius: 0; background: #fff; padding: 0 0 0 4px; }
.pick svg { position: absolute; right: 4px; top: 8px; width: 8px; height: 5px; pointer-events: none; }
.pick path, .vscroll path { fill: none; stroke: #505050; stroke-width: 1.2; }
.w37 { width: 37px; } .w73 { width: 73px; } .w109 { width: 109px; } .w101 { width: 101px; } .w82 { width: 82px; }
.material { padding: 7px 7px 8px 9px; }
.btns { gap: 2px; }
.btns .name { padding-bottom: 2px; }
.val { height: 21px; min-width: 38px; background: #e1e1e1; border: 1px solid #adadad; padding: 0 1px; }
.dots { height: 21px; width: 16px; background: #e1e1e1; border: 1px solid #bdbdbd; gap: 2px; padding-top: 7px; }
.dots i { width: 2px; height: 2px; background: #2d6399; }
.geometry { padding: 10px 9px 9px 9px; display: flex; flex-direction: column; gap: 5px; }
.num { width: 53px; height: 19px; border: 1px solid #7f7f7f; background: #fff; text-align: right; padding: 0 4px 1px 0; }
.unit { width: 23px; padding-left: 5px; }
.bolts { padding: 5px 7px 9px; display: flex; flex-direction: column; }
.bolts .row, .bolts > .check { padding-left: 2px; }
.boltbox { display: flex; margin-top: 2px; border: 1px solid #cfcfcf; height: 72px; margin-bottom: 7px; }
.bolttable { flex: 1; height: 70px; text-align: center; }
.bolttable thead th { height: 19px; background: #f0f0f0; border-right: 1px solid #dedede; }
.bolttable td { border-right: 1px solid #e6e6e6; border-bottom: 1px solid #efefef; }
.bolttable .idx { width: 21px; }
.bolttable tbody .idx { background: #ffffc8; text-align: right; padding-right: 6px; }
.bolttable .sel td { background: #cce8ff; }
.bolttable .sel .idx + td { background: #4a9be0; color: #fff; }
.mat { margin-top: 8px; }
.spacerow { margin-top: 10px; }
.place { margin-top: 6px; }
.spacerow, .bolts .place { padding-right: 2px; }
.check { display: flex; align-items: center; gap: 3px; }
.bolts > .check { margin-top: 5px; }
.filler { height: 60px; }

.vscroll { width: 12px; flex: none; display: flex; flex-direction: column; align-items: center; justify-content: space-between; padding: 6px 0 5px; }
.vscroll svg { width: 8px; height: 5px; }
.vscroll .thumb { width: 12px; height: 491px; margin: 3px 0 auto; background: #cdcdcd; }
.vscroll.small { width: 14px; padding: 5px 0; background: #f0f0f0; }
.vscroll.small .thumb { height: 21px; margin-top: 4px; }

.view { flex: 1; min-width: 0; display: flex; flex-direction: column; }
.viewbar { height: 23px; flex: none; display: flex; align-items: center; justify-content: flex-end; }
.viewbar button { width: 20px; height: 22px; }
.viewbar .sep { height: 20px; margin: 0 2px; background: #d0d0d0; }
.canvas { flex: 1; min-height: 0; position: relative; background: #fff; }
.scene { width: 100%; height: 100%; overflow: hidden; }
.tip { position: absolute; left: 659px; top: 203px; width: 133px; padding: 5px 6px 3px; background: #f6f6f6; border: 1px solid #3c3c3c; font-size: 11px; line-height: 15px; white-space: nowrap; color: #333; }
.tip strong { display: block; color: #111; }
.tip dl { margin: 0; display: grid; grid-template-columns: 52px 1fr; }
.tip dt, .tip dd { margin: 0; }

.foot { flex: none; height: 33px; background: #e8e8e8; border-top: 1px solid #dadada; display: flex; align-items: center; justify-content: center; }
.accept { width: 58px; height: 21px; background: #e1e1e1; border: 2px solid #0078d7; }
</style>
